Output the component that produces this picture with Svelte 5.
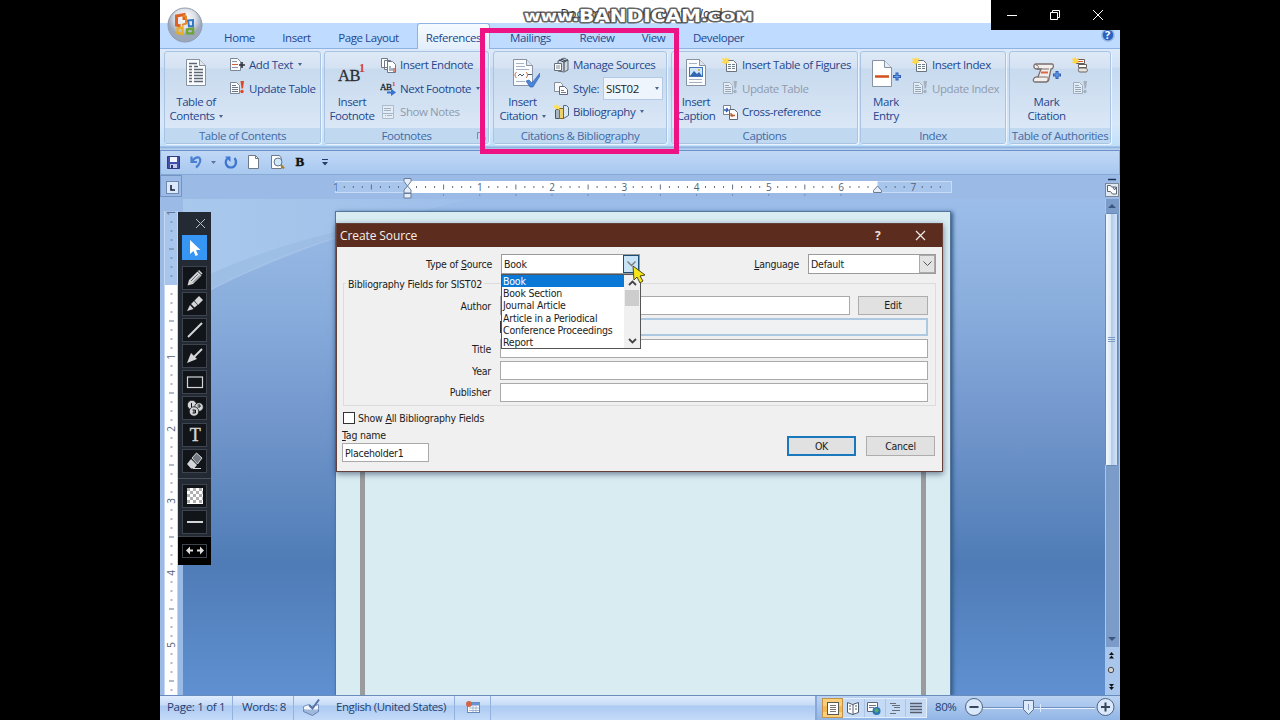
<script>
    const tabs = [
        { name: 'Home' },
        { name: 'Insert' },
        { name: 'Page Layout' },
        { name: 'References', active: true },
        { name: 'Mailings' },
        { name: 'Review' },
        { name: 'View' },
        { name: 'Developer' },
    ];

    const groups = [
        {
            id: 'toc', title: 'Table of Contents',
            big: { icon: 'page', lines: ['Table of', 'Contents'], arrow: true },
            items: [
                { icon: 'addtext', text: 'Add Text', arrow: true },
                { icon: 'update', text: 'Update Table' },
            ],
        },
        {
            id: 'foot', title: 'Footnotes', launcher: true,
            big: { icon: 'footnote', lines: ['Insert', 'Footnote'] },
            items: [
                { icon: 'endnote', text: 'Insert Endnote' },
                { icon: 'next', text: 'Next Footnote', arrow: true },
                { icon: 'notes', text: 'Show Notes', off: true },
            ],
        },
        {
            id: 'cite', title: 'Citations & Bibliography',
            big: { icon: 'citation', lines: ['Insert', 'Citation'], arrow: true },
            items: [
                { icon: 'manage', text: 'Manage Sources' },
                { icon: 'style', text: 'Style:', combo: 'SIST02' },
                { icon: 'biblio', text: 'Bibliography', arrow: true },
            ],
        },
        {
            id: 'caption', title: 'Captions',
            big: { icon: 'caption', lines: ['Insert', 'Caption'] },
            items: [
                { icon: 'newtable', text: 'Insert Table of Figures' },
                { icon: 'updateoff', text: 'Update Table', off: true },
                { icon: 'cross', text: 'Cross-reference' },
            ],
        },
        {
            id: 'index', title: 'Index',
            big: { icon: 'entry', lines: ['Mark', 'Entry'] },
            items: [
                { icon: 'newtable', text: 'Insert Index' },
                { icon: 'updateoff', text: 'Update Index', off: true },
            ],
        },
        {
            id: 'auth', title: 'Table of Authorities',
            big: { icon: 'scroll', lines: ['Mark', 'Citation'] },
            items: [
                { icon: 'newauth', text: '' },
                { icon: 'updateoff', text: '', off: true },
            ],
        },
    ];

    const sources = ['Book', 'Book Section', 'Journal Article', 'Article in a Periodical', 'Conference Proceedings', 'Report'];
    const tools = ['select', 'pencil', 'marker', 'line', 'arrow', 'rect', 'number', 'text', 'eraser'];

    const EIGHTH = 9.03;
    const hTicks = [];
    for (let i = -7; i <= 59; i++) {
        if (i !== 0 && i !== 52) hTicks.push({ i, at: 72.5 + i * EIGHTH });
    }
    const vTicks = [];
    for (let i = -8; i <= 45; i++) {
        if (i !== 0) vTicks.push({ i, at: 73 + i * 9 });
    }
</script>

{#snippet icon(name)}
    {#if name === 'page' || name === 'citation' || name === 'caption'}
        <svg width="34" height="32" viewBox="0 0 34 32">
            <path d="M7.500 1.500h13l6 6v20h-19z" fill="#fbfcfe" stroke="#8792a3" />
            <path d="M20.500 1.500v6h6" fill="#dfe6ef" stroke="#8792a3" />
            {#if name === 'page'}
                <path d="M10 5.500h8M10 8.500h3M15 8.500h4M10 11.500h3M15 11.500h9M10 14.500h3M15 14.500h9M10 17.500h3M15 17.500h9M10 20.500h3M15 20.500h9M10 23.500h3M15 23.500h9" stroke="#5c6775" stroke-width="1.300" />
            {:else if name === 'citation'}
                <path d="M10 5.500h8M10 8.500h9M10 11.500h13M10 23.500h9" stroke="#a4b2c3" />
                <path d="M10.500 14c-2 2-2 4 0 6M20 14c2 2 2 4 0 6" fill="none" stroke="#cb5a27" />
                <path d="M12 18l2-2 2 2 2-2M22 16.500h4" fill="none" stroke="#4d5560" />
                <path d="M20 23l3-1 3 3 8-10 1 1-8 13h-3z" fill="#4a86d8" stroke="#2858aa" stroke-width=".6" />
            {:else}
                <path d="M10 5.500h8M10 21.500h13M10 24.500h13" stroke="#a4b2c3" />
                <rect x="10.500" y="9.500" width="13" height="9" fill="#cfe5fb" stroke="#4474b7" />
                <path d="M11 18l4-5 3 3 2-2 3 4z" fill="#2f66ae" />
                <circle cx="20" cy="12" r="1" fill="#d99b35" />
            {/if}
        </svg>
    {:else if name === 'footnote'}
        <svg width="34" height="32" viewBox="0 0 34 32">
            <text x="3" y="23" class="serif" font-size="17" fill="#2c2c31" stroke="#2c2c31" stroke-width=".3" textLength="22" lengthAdjust="spacingAndGlyphs">AB</text>
            <text x="24" y="14" class="serif" font-size="12" font-weight="bold" fill="#d4442b">1</text>
        </svg>
    {:else if name === 'entry'}
        <svg width="34" height="32" viewBox="0 0 34 32">
            <path d="M3.500 2.500h12l7 7v19h-19z" fill="#fff" stroke="#8792a3" />
            <path d="M15.500 2.500v7h7" fill="#e4eaf2" stroke="#8792a3" />
            <path d="M6 18.500h14" stroke="#d1501d" stroke-width="2.500" />
            <path d="M24 18.500h8M28 14.500v8" stroke="#2c5cb4" stroke-width="3" />
            <path d="M25 18.500h6M28 15.500v6" stroke="#6fa4ec" />
        </svg>
    {:else if name === 'scroll'}
        <svg width="34" height="32" viewBox="0 0 34 32">
            <path d="M6 6c-3 0-3 5 1 5h4l-3 8c-5-1-6 5-3 5h11c2 0 3-1 3-4l2-9c3 0 3-5 1-5z" fill="#f3efed" stroke="#7b6f6e" stroke-width="1.300" />
            <path d="M6 7c3 0 3 4 1 4h12M8 19h9c2 0 1 4-1 5" fill="none" stroke="#7b6f6e" />
            <path d="M11 14.500h7" stroke="#dd6843" stroke-width="2" />
            <path d="M23 17h8M27 13v8" stroke="#2c5cb4" stroke-width="3" />
            <path d="M24 17h6M27 14v6" stroke="#6fa4ec" />
        </svg>
    {:else}
        <svg width="16" height="16" viewBox="0 0 16 16">
            {#if name === 'addtext'}
                <path d="M1.500 1.500h7l3 3v9h-10z" fill="#f8fafc" stroke="#7b8797" />
                <path d="M3 4.500h5M3 10.500h6" stroke="#8793a4" /><path d="M3 7.500h6" stroke="#d45d3e" />
                <path d="M10 8h6M13 5v6" stroke="#2b3138" stroke-width="1.600" />
            {:else if name === 'update' || name === 'updateoff'}
                <g class:faded={name === 'updateoff'}>
                    <path d="M1.500 2.500h6l3 3v8h-9z" fill="#f8fafc" stroke="#7b8797" />
                    <path d="M3 5.500h4M3 7.500h6M3 9.500h6M3 11.500h6" stroke="#6b7787" />
                    <path d="M11.500 1h3.500l-1 7.500h-1.500z" fill={name === 'update' ? '#e2471f' : '#858c97'} />
                    <circle cx="13" cy="11.500" r="1.700" fill={name === 'update' ? '#e2471f' : '#858c97'} />
                </g>
            {:else if name === 'endnote'}
                <path d="M1.500 1.500h6v9h-6zM4.500 3.500h6v9h-6z" fill="#fff" stroke="#6f7884" />
                <path d="M7.500 4.500h5l3 3v8h-8z" fill="#fff" stroke="#6f7884" />
                <path d="M10 9v5M12 11v3" stroke="#526b91" /><path d="M14 11v4" stroke="#ce4326" stroke-width="1.300" />
            {:else if name === 'next'}
                <text x="0" y="10" class="serif" font-size="9" fill="#22252b" stroke="#22252b" stroke-width=".3">AB</text>
                <text x="12" y="6" class="serif" font-size="7" font-weight="bold" fill="#d43d26">1</text>
                <path d="M7 11.500h4v-3l5 4-5 3.500v-2.500h-4z" fill="#3574cf" />
            {:else if name === 'notes'}
                <g opacity=".6"><path d="M2.500 1.500h11v13h-11z" fill="#eef2f7" stroke="#93a0b1" />
                <path d="M4 4.500h7M4 6.500h7M3 9.500h10M5 11.500h1M7 11.500h5" stroke="#8190a3" /></g>
            {:else if name === 'manage'}
                <path d="M5 4l6-3 4 2v10l-4 2-6-1z" fill="#cfd7e0" stroke="#586473" />
                <path d="M11 5l4-2M11 5v9M6 3l5 2M8 2l5 2" stroke="#303b49" />
                <path d="M1.500 6.500h7v7h-7z" fill="#fff" stroke="#65707e" /><path d="M3 9h4M3 11h4" stroke="#7f8995" />
            {:else if name === 'style'}
                <path d="M1.500 2.500h6l2 2v7h-8z" fill="#f6f8fa" stroke="#87919e" />
                <path d="M6.500 6.500h5l3 3v5h-8z" fill="#fff" stroke="#5f6b7a" />
                <path d="M8 10.500h3M8 12.500h5" stroke="#6f7c8d" />
            {:else if name === 'biblio'}
                <path d="M2.500 5.500h4v9h-4z" fill="#aab5c2" stroke="#4a5564" />
                <path d="M6.500 4.500h4v10h-4z" fill="#ecd16b" stroke="#8e6b1b" />
                <path d="M10.500 1.500h3l2 2v8l-5 3z" fill="#d9e8f8" stroke="#556579" />
                <path d="M1 1l2 1 1-2 1 2 3 0-2 2 1 2-3-1-2 1 0-2-2-1z" fill="#ffdf54" />
            {:else if name === 'newtable'}
                <path d="M4.500 3.500h7l3 3v8h-10z" fill="#fafbfc" stroke="#69737f" />
                <path d="M6 7.500h3M6 9.500h3M6 11.500h3M10 7.500h3M10 9.500h3M10 11.500h3" stroke="#70808f" />
                <path d="M0 1l3 1 1-2 1 2 3-1-2 3 2 2-3 0-2 2-1-2-3 0 2-2z" fill="#ffd94e" />
            {:else if name === 'cross'}
                <path d="M1.500 1.500h7v9h-7z" fill="#fff" stroke="#7a8490" />
                <path d="M7.500 5.500h5l3 3v7h-8z" fill="#fff" stroke="#5f6975" />
                <path d="M2 6h4l-1.500-2M4 8l2-2" fill="none" stroke="#2e60af" stroke-width="1.300" />
                <path d="M9 9v2.500h4M10 13v-3" fill="none" stroke="#be5d31" stroke-width="1.300" />
            {:else if name === 'newauth'}
                <path d="M4.500 2.500h8v4h-8zM6.500 7.500h8v3h-8z" fill="#fff" stroke="#665d5a" />
                <path d="M6 4.500h5" stroke="#cf582e" /><path d="M7 11h6c3 0 3 4 1 4h-6c-2 0-2-2-1-4z" fill="#e8e2df" stroke="#6c6461" />
                <path d="M0 1l2 1 1-2 1 2 3-1-1 3 1 2-3 0-1 1-1-1-2 0 1-2z" fill="#ffd54a" />
            {/if}
        </svg>
    {/if}
{/snippet}

{#snippet tool(name)}
    <svg width="18" height="18" viewBox="0 0 18 18" fill="none" stroke="#d3d5d7">
        {#if name === 'select'}
            <path d="M4 1v14l3.500-3 2 5 2.500-1-2-5h4.500z" fill="#fff" stroke="none" />
        {:else if name === 'pencil'}
            <path d="M1.500 16.500l1.500-5.500 8.500-8.500 4 4-8.500 8.500z" fill="#d3d5d7" stroke="none" />
            <path d="M5 12l7-7M7 13.500l7-7" stroke="#4a4f56" stroke-width=".8" /><path d="M12.500 1.500l3.500 3.500" stroke-width="1.500" />
        {:else if name === 'marker'}
            <path d="M8.500 5.500l4.500-4.500 4 4-5 5z" fill="#d3d5d7" stroke="none" /><path d="M5 9l3-3 3.500 4-3 2.500zM1 16l3-6 3.500 4z" fill="#d3d5d7" stroke="none" />
        {:else if name === 'line'}
            <path d="M2 16L16 2" stroke-width="2" />
        {:else if name === 'arrow'}
            <path d="M16 2L7 11" stroke-width="2" /><path d="M1 16l4-10 6 6z" fill="#d3d5d7" stroke="none" />
        {:else if name === 'rect'}
            <rect x="1.500" y="4" width="15" height="10.500" stroke-width="1.200" />
        {:else if name === 'number'}
            <g fill="#d3d5d7" stroke="#15181d" stroke-width=".8"><circle cx="6" cy="6" r="4.700" /><circle cx="13" cy="8" r="4.300" /><circle cx="8" cy="12.500" r="4.700" /></g>
            <path d="M5.500 4v4M11.500 6h2.500v2h-2.500M6.500 11h3v3h-3M8 11v3" stroke="#15181d" />
        {:else if name === 'text'}
            <text x="9" y="15" class="serif" font-size="18" text-anchor="middle" fill="#d3d5d7" stroke-width=".4">T</text>
        {:else if name === 'eraser'}
            <path d="M1 12l4-5 6 6-3 3.500H5z" fill="#d3d5d7" stroke="none" /><path d="M6 6l4.500-5 5.500 5-4.500 6z" fill="#737980" stroke="#d3d5d7" /><path d="M7 16.500h8" />
        {/if}
    </svg>
{/snippet}

<div class="screen">
    <div class="word">
        <header class="titlebar">
            <span class="titlebar__text">Document1 - Microsoft Word</span>
        </header>

        <nav class="tabs">
            {#each tabs as tab, i}
                <div class="tabs__tab tabs__tab--{i}" class:active={tab.active}>{tab.name}</div>
            {/each}
            <svg class="tabs__help" width="14" height="14" viewBox="0 0 14 14">
                <circle cx="7" cy="7" r="6" fill="#2961bd" stroke="#94b4df" stroke-width="1.500" />
                <text x="4" y="11" font-size="11" font-weight="bold" fill="#fff">?</text>
            </svg>
        </nav>

        <div class="ribbon">
            {#each groups as group}
                <section class="group group--{group.id}">
                    <div class="group__body">
                        <div class="big">
                            <div class="big__icon">{@render icon(group.big.icon)}</div>
                            <div>{group.big.lines[0]}</div>
                            <div>{group.big.lines[1]}{#if group.big.arrow}<i class="caret"></i>{/if}</div>
                        </div>
                        <div class="small">
                            {#each group.items as item}
                                <div class="small__row" class:off={item.off}>
                                    {@render icon(item.icon)}
                                    <span>{item.text}</span>
                                    {#if item.combo}
                                        <div class="combo">{item.combo}<i class="caret"></i></div>
                                    {:else if item.arrow}
                                        <i class="caret"></i>
                                    {/if}
                                </div>
                            {/each}
                        </div>
                    </div>
                    <footer class="group__title">
                        {group.title}
                        {#if group.launcher}
                            <svg class="launcher" width="9" height="9" viewBox="0 0 9 9" fill="none" stroke="#6b8bb8"><path d="M.5 7V.5H7M4 4l4 4M8 5v3H5" /></svg>
                        {/if}
                    </footer>
                </section>
            {/each}
        </div>

        <div class="quick">
            <svg width="180" height="22" viewBox="0 0 180 22">
                <path d="M6.500 5.500h12v12h-12z" fill="#4150a8" stroke="#303b86" />
                <path d="M9 6h7v5h-7z" fill="#f4f6ff" /><path d="M9 13h7v4h-7z" fill="#c4cae9" /><path d="M10 14h2v3h-2z" fill="#29357c" />
                <path d="M30.500 5.500v5.500h5.500M31.500 10c4-6 9-4 7.500 1-1 3-2 4-4 5.500" fill="none" stroke="#4a7fd2" stroke-width="2.200" />
                <path d="M50 10h5l-2.500 3z" fill="#58759e" />
                <path d="M66 7.500c-3 5 0 9 4 9s7-5 3.500-9.500" fill="none" stroke="#3e77cf" stroke-width="2.200" /><path d="M64 5.500h5.500v5.500z" fill="#3e77cf" />
                <path d="M87.500 4.500h7l3 3v10h-10z" fill="#fff" stroke="#707b89" /><path d="M94.500 4.500v3h3" fill="none" stroke="#707b89" />
                <path d="M110.500 4.500h8l2 3v10h-10z" fill="#fff" stroke="#707b89" /><circle cx="117" cy="11" r="4" fill="#cfe8fa" stroke="#65778c" /><path d="M120 14l3 3.500" stroke="#a68230" stroke-width="2" />
                <text x="134.500" y="15" class="serif" font-size="13" font-weight="bold" fill="#111" stroke="#111" stroke-width=".4">B</text>
                <path d="M161 8.500h6" stroke="#243d6a" /><path d="M161 11h6l-3 3.500z" fill="#243d6a" />
            </svg>
        </div>

        <div class="ruler">
            <div class="ruler__corner"><svg width="13" height="13" viewBox="0 0 13 13"><rect x=".5" y=".5" width="12" height="12" fill="#dce9fa" stroke="#6d87ae" /><path d="M5 4v5h4" fill="none" stroke="#14233b" stroke-width="1.600" /></svg></div>
            <svg class="ruler__scale" width="620" height="25" viewBox="0 0 620 25">
                <rect x=".5" y="6.500" width="616" height="11" fill="#a8c5ec" stroke="#c9dcf5" />
                <rect x="72.500" y="6" width="470" height="12" fill="#fff" />
                {#each hTicks as t}
                    {#if t.i % 8 === 0}
                        <text x={t.at} y="16" text-anchor="middle">{Math.abs(t.i / 8)}</text>
                    {:else if t.i % 4 === 0}
                        <path d="M{t.at} 9.500v5" stroke="#5f6e84" />
                    {:else}
                        <path d="M{t.at} 11v2" stroke="#5f6e84" />
                    {/if}
                    {#if t.i % 4 === 0 && t.i > 0 && t.i < 50}<path d="M{t.at} 19v2" stroke="#7690b5" />{/if}
                {/each}
                <text x="-2" y="16">1</text>
                <path d="M69 3.500h7v3l-3.500 4.500-3.500-4.500zM72.500 11l3.500 4v3h-7v-3zM69 18.500h7v4.500h-7z" fill="#e4edf8" stroke="#687c98" />
                <path d="M538.500 17.500v-2l4-4.500 4 4.500v2z" fill="#e4edf8" stroke="#687c98" />
            </svg>
            <svg class="ruler__toggle" width="15" height="25" viewBox="0 0 15 25">
                <path d="M3 4.500h8" stroke="#1d3357" stroke-width="1.500" />
                <rect x=".5" y="8.500" width="13" height="13" fill="#e0e8f2" stroke="#7b8698" />
                <path d="M2.500 10.500h3l1 1.500h5v7h-4l-2-2.500h-3zM8 12l1.500 3 2-3" fill="#fff" stroke="#5c6674" />
            </svg>
        </div>

        <main class="work">
            <div class="vruler">
                <svg width="18" height="496" viewBox="0 0 18 496">
                    <rect x="5" y="12" width="12" height="74" fill="#a8c5ec" />
                    <rect x="5" y="86" width="12" height="410" fill="#fff" />
                    <path d="M4.500 12v484M17.500 12v484" stroke="#c4d8f2" />
                    {#each vTicks as t}
                        {#if t.i % 8 === 0}
                            <text transform="translate(15 {t.at + 13}) rotate(-90)" text-anchor="middle">{Math.abs(t.i / 8)}</text>
                        {:else if t.i % 4 === 0}
                            <path d="M9 {t.at + 13}h5" stroke="#65748a" />
                        {:else}
                            <path d="M10.500 {t.at + 13}h2" stroke="#65748a" />
                        {/if}
                    {/each}
                </svg>
            </div>
            <div class="canvas">
                <svg class="canvas__swoosh" width="300" height="120" viewBox="0 0 300 120">
                    <defs><linearGradient id="sheen"><stop offset="0" stop-color="#a9c8ec" /><stop offset="1" stop-color="#9ebfea" /></linearGradient></defs>
                    <path d="M0 0h290Q160 28 29 90L0 106z" fill="url(#sheen)" />
                    <path d="M0 88Q80 48 170 29L290 0Q160 28 29 90L0 106z" fill="#9bbbe4" opacity=".8" />
                    <path d="M0 106L29 90Q90 58 152 39" fill="none" stroke="#a9c4e8" />
                </svg>
                <div class="page"></div>
            </div>
            <svg class="scroll" width="15" height="496" viewBox="0 0 15 496">
                <defs><linearGradient id="thumb"><stop offset="0" stop-color="#f4f9ff" /><stop offset=".45" stop-color="#dbe8f7" /><stop offset=".5" stop-color="#b5cde9" /><stop offset="1" stop-color="#d4e6fa" /></linearGradient></defs>
                <rect width="15" height="496" fill="#a9c6ec" />
                <rect x="1" width="13" height="448" fill="#7b9cc8" />
                <path d="M3 9h8l-4-4z" fill="#3b5780" />
                <rect x=".5" y="14.500" width="12" height="252" rx="1" fill="url(#thumb)" stroke="#6788b7" />
                <path d="M3 138.500h7M3 140.500h7M3 142.500h7" stroke="#7e9cc3" />
                <path d="M3 438h8l-4 4z" fill="#3b5780" />
                <path d="M4 456h5l-2.500-3zM4 459.500h5l-2.500-3zM4 485h5l-2.500 3zM4 488h5l-2.500 3z" fill="#111" />
                <circle cx="6" cy="471" r="2.700" fill="#d5d2cd" stroke="#494a50" />
            </svg>
        </main>

        <footer class="status">
            <div class="status__cell status__cell--page">Page: 1 of 1</div>
            <div class="status__cell status__cell--words">Words: 8</div>
            <div class="status__cell status__cell--lang">
                <svg width="20" height="18" viewBox="0 0 20 18"><path d="M1.500 8.500l5-2 3 2 7-2v5l-6 4-9-4z" fill="#f3f7fd" stroke="#7791ba" /><path d="M1.500 11.500v2l9 4 6-4v-2" fill="#9fb8dc" stroke="#6382b3" /><path d="M7 7l3.500 3.500L17 1.500" fill="none" stroke="#5573a8" stroke-width="2" /></svg>
                <span>English (United States)</span>
            </div>
            <div class="status__cell status__cell--macro"><svg width="16" height="14" viewBox="0 0 16 14"><rect x="2.500" y="2.500" width="12" height="10" fill="#fff" stroke="#6788b7" /><path d="M3 4h12" stroke="#6b93cf" stroke-width="3" /><path d="M4 8h10M4 10.500h10M8 6v6M11 6v6" stroke="#9fb6d6" /><circle cx="4" cy="4" r="3" fill="#d36549" /></svg></div>
            <div class="status__fill"></div>
            <div class="status__right">
                <svg width="105" height="20" viewBox="0 0 105 20" fill="none">
                    <rect x=".5" y=".5" width="104" height="19" fill="#c5daf5" stroke="#e3eefc" />
                    <rect x=".5" y=".5" width="20" height="19" fill="#fbce7a" stroke="#c39347" /><rect x="1" y="8" width="19" height="6" fill="#f6b851" />
                    <rect x="5.500" y="4.500" width="11" height="12" fill="#fff" stroke="#5c584d" /><path d="M8 7.500h6M8 9.500h6M8 11.500h6M8 13.500h6" stroke="#77736b" />
                    <path d="M25.500 4.500l5 2 6-2v10l-6 2-5-2zM31 6v11" fill="#fff" stroke="#4d5a69" /><path d="M27 8h2M27 11h2M33 8h2M33 11h2" stroke="#4d5a69" />
                    <path d="M45.500 4.500h10v9h-10z" fill="#fff" stroke="#5b6878" /><path d="M47 7.500h7M47 9.500h5" stroke="#6d7989" /><circle cx="54.500" cy="13" r="4" fill="#2876b9" /><path d="M52 12l3-2 2 3-3 2z" fill="#5ba96a" />
                    <path d="M68 5.500h6M70 7.500h8M72 9.500h6M70 12.500h8M68 15.500h6" stroke="#666f7b" /><path d="M88 5.500h12M88 8.500h12M88 11.500h12M88 14.500h12" stroke="#555e6a" stroke-width="1.300" />
                    <path d="M42.500 1v18M63.500 1v18M83.500 1v18" stroke="#adc4e4" />
                </svg>
                <span class="status__zoom">80%</span>
                <svg width="154" height="24" viewBox="0 0 154 24">
                    <path d="M20 11.500h114" stroke="#7090bf" /><path d="M20 12.500h114" stroke="#e7f1ff" /><path d="M79.500 8v8" stroke="#dceaff" />
                    <circle cx="13" cy="11" r="8.500" fill="#d9e8fb" stroke="#52647f" /><path d="M8.500 11h9" stroke="#37465b" stroke-width="2" />
                    <path d="M62.500 4.500h10v9l-5 5-5-5z" fill="#dceafb" stroke="#59718f" /><path d="M67.500 8v6" stroke="#8aa2c1" />
                    <circle cx="144.500" cy="11" r="8.500" fill="#d9e8fb" stroke="#52647f" /><path d="M140 11h9M144.500 6.500v9" stroke="#37465b" stroke-width="2" />
                </svg>
            </div>
        </footer>

        <svg class="orb" width="38" height="38" viewBox="0 0 38 38">
            <defs><radialGradient id="orb" cy=".3"><stop offset="0" stop-color="#fff" /><stop offset=".6" stop-color="#dce0e8" /><stop offset="1" stop-color="#9ba7bb" /></radialGradient></defs>
            <circle cx="19" cy="19" r="17" fill="url(#orb)" stroke="#909bad" />
            <g fill="none">
                <path d="M18 14V8.500l-7.500 1.500v9l4 1" stroke="#dc6224" stroke-width="3" />
                <path d="M17 9.500l3 1v7l-4 1.500" stroke="#e58b2c" stroke-width="2" />
                <path d="M22 14.500l5-.5v6l-4 .5z" stroke="#3178c8" stroke-width="2" />
                <path d="M11.500 22.500l5-1v6.500l-5-1z" stroke="#eaad27" stroke-width="2.300" />
                <path d="M21 23.500l6-1v5l-6-.3z" stroke="#6fa33b" stroke-width="2.500" />
            </g>
        </svg>

        <div class="controls">
            <svg width="129" height="30" viewBox="0 0 129 30" fill="none" stroke="#fff">
                <path d="M16 15.500h10M102 10l10 10M112 10l-10 10" />
                <path d="M59.500 12.500h7v7h-7zM61.500 12.500v-2h7v7h-2" />
            </svg>
        </div>

        <svg class="watermark" width="250" height="28" viewBox="0 0 250 28">
            <g font-weight="bold" fill="#fff" stroke="#3c3c3c" stroke-opacity=".8" stroke-width="3" paint-order="stroke" stroke-linejoin="round">
                <text x="12" y="21" font-size="14" textLength="55" lengthAdjust="spacingAndGlyphs">www.</text>
                <text x="67" y="22" font-size="17" textLength="122" lengthAdjust="spacingAndGlyphs">BANDICAM</text>
                <text x="189" y="21" font-size="13" textLength="52" lengthAdjust="spacingAndGlyphs">.COM</text>
            </g>
        </svg>

        <div class="highlight"></div>

        <aside class="tools">
            <svg class="tools__close" width="11" height="11" viewBox="0 0 11 11"><path d="M1 1l9 9M10 1l-9 9" stroke="#b9bdc2" /></svg>
            {#each tools as name}
                <div class="tools__btn" class:selected={name === 'select'}>{@render tool(name)}</div>
            {/each}
            <div class="tools__sep"></div>
            <div class="tools__btn">
                <svg width="16" height="16" viewBox="0 0 16 16"><rect width="16" height="16" fill="#fff" /><path d="M0 1.500h16M0 7.500h16M0 13.500h16" stroke="#b0b0b0" stroke-width="3" stroke-dasharray="3 3" /><path d="M3 4.500h13M3 10.500h13" stroke="#b0b0b0" stroke-width="3" stroke-dasharray="3 3" /></svg>
            </div>
            <div class="tools__btn"><svg width="16" height="16" viewBox="0 0 16 16"><path d="M0 8h16" stroke="#d3d5d7" stroke-width="2" /></svg></div>
            <div class="tools__foot">
                <div class="tools__resize"><svg width="20" height="9" viewBox="0 0 20 9"><path d="M1 4.500l4-4v3h3v2h-3v3zM19 4.500l-4-4v3h-3v2h3v3z" fill="#ddd" /></svg></div>
            </div>
        </aside>

        <div class="dialog">
            <div class="dialog__title">
                <span>Create Source</span>
                <svg width="60" height="22" viewBox="0 0 60 22"><text x="2" y="15" font-size="12" font-weight="bold" fill="#eee0dc">?</text><path d="M43 6l9 9M52 6l-9 9" stroke="#f3e9e6" stroke-width="1.200" /></svg>
            </div>
            <div class="dialog__top">
                <span class="label">Type of <u>S</u>ource</span>
                <div class="select select--type">Book
                    <span class="select__btn select__btn--hot"><svg width="9" height="6" viewBox="0 0 9 6"><path d="M.5.5l4 4 4-4" fill="none" stroke="#777" stroke-width="1.300" /></svg></span>
                    <div class="menu">
                        <div class="menu__list">
                            {#each sources as s, i}
                                <div class="menu__item" class:picked={i === 0}>{s}</div>
                            {/each}
                        </div>
                        <div class="menu__bar">
                            <svg width="9" height="6" viewBox="0 0 9 6"><path d="M1 5l3.500-3.500L8 5" fill="none" stroke="#444" stroke-width="1.800" /></svg>
                            <div class="menu__thumb"></div>
                            <svg width="9" height="6" viewBox="0 0 9 6"><path d="M1 1l3.500 3.500L8 1" fill="none" stroke="#444" stroke-width="1.800" /></svg>
                        </div>
                    </div>
                </div>
                <span class="label label--lang"><u>L</u>anguage</span>
                <div class="select select--lang">Default
                    <span class="select__btn"><svg width="9" height="6" viewBox="0 0 9 6"><path d="M.5.5l4 4 4-4" fill="none" stroke="#555" /></svg></span>
                </div>
            </div>
            <div class="fields">
                <div class="fields__legend"><span>Bibliography Fields for SIST02</span></div>
                <div class="fields__row"><span class="label">Author</span><div class="input"></div><div class="button button--edit">Edit</div></div>
                <div class="fields__row"><span class="label"></span><i class="check"></i><div class="input input--corp"></div></div>
                <div class="fields__row"><span class="label">Title</span><div class="input"></div></div>
                <div class="fields__row"><span class="label">Year</span><div class="input"></div></div>
                <div class="fields__row"><span class="label">Publisher</span><div class="input"></div></div>
            </div>
            <div class="dialog__bottom">
                <div class="dialog__tag">
                    <div class="dialog__show"><i class="check"></i><span>Show <u>A</u>ll Bibliography Fields</span></div>
                    <div class="dialog__tagname"><u>T</u>ag name</div>
                    <div class="input input--tag">Placeholder1</div>
                </div>
                <div class="button button--ok">OK</div>
                <div class="button">Cancel</div>
            </div>
        </div>

        <svg class="cursor" width="14" height="20" viewBox="0 0 14 20"><path d="M1 1l1 14 3-3 3 6 3-2-3-5 5-1z" fill="#f5e61a" stroke="#4d4a20" /></svg>
    </div>
</div>

<style>
    :global(body) {
        margin: 0;
        background: #000;
    }

    .screen {
        width: 1280px;
        height: 720px;
        background: #000;
        overflow: hidden;
        font-family: "Open Sans", "Noto Sans", sans-serif;
    }

    .word {
        position: relative;
        width: 960px;
        height: 720px;
        margin: 0 auto;
        display: flex;
        flex-direction: column;
        overflow: hidden;
        background: #a9c8f0;
        font-size: 11.5px;
        letter-spacing: -0.42px;
        color: #24478d;
        white-space: nowrap;
    }

    svg {
        display: block;
        flex: none;
    }

    .serif {
        font-family: "Liberation Serif", serif;
    }

    .titlebar {
        height: 23px;
        background: #fff;
        display: flex;
        justify-content: center;
        align-items: center;
    }
    .titlebar__text {
        color: #333;
        font-size: 12px;
        letter-spacing: 0;
        padding: 3px 0 0 3px;
    }

    .tabs {
        height: 26px;
        background: #bfdbff;
        display: flex;
        padding-left: 48px;
        line-height: 30px;
        border-bottom: 1px solid #8db2e3;
        box-sizing: border-box;
    }
    .tabs__tab {
        text-align: center;
        flex: none;
        height: 26px;
    }
    .tabs__tab--0 { width: 63px; }
    .tabs__tab--1 { width: 51px; }
    .tabs__tab--2 { width: 93px; }
    .tabs__tab--3 { width: 73px; margin-left: 2px; }
    .tabs__tab--4 { width: 81px; }
    .tabs__tab--5 { width: 52px; }
    .tabs__tab--6 { width: 61px; }
    .tabs__tab--7 { width: 69px; }
    .tabs__tab.active {
        background: linear-gradient(#f5faff, #e3eefb);
        border: 1px solid #8db2e3;
        border-bottom: 0;
        border-radius: 3px 3px 0 0;
        box-sizing: border-box;
        line-height: 28px;
    }
    .tabs__help {
        margin: 5px 5px 0 auto;
    }

    .ribbon {
        height: 101px;
        box-sizing: border-box;
        padding: 2px 4px 6px;
        display: flex;
        background: linear-gradient(#dce9f8 0, #d2e2f5 18px, #c5d9f0 19px, #d8e8f9 75px, #bfe0fa 97px, #86a9d6 98px, #b5d0f2 100px);
    }
    .group {
        display: flex;
        flex-direction: column;
        box-sizing: border-box;
        border: 1px solid #a9c3e3;
        border-radius: 3px;
        background: linear-gradient(#dee9f6 0, #d5e2f2 16px, #c8daee 17px, #dae7f6 76px);
        box-shadow: 1px 1px 0 #ecf5ff;
        flex: none;
    }
    .group--toc { width: 157px; margin-right: 3px; }
    .group--foot { width: 165px; margin-right: 4px; }
    .group--cite { width: 174px; margin-right: 4px; }
    .group--caption { width: 187px; margin-right: 2px; }
    .group--index { width: 146px; margin-right: 3px; }
    .group--auth { width: 102px; }
    .group__body {
        height: 76px;
        display: flex;
    }
    .group__title {
        flex: 1;
        background: #c1d8f1;
        color: #416aa5;
        line-height: 15px;
        text-align: center;
        position: relative;
    }
    .launcher {
        position: absolute;
        right: 2px;
        top: 4px;
    }

    .big {
        text-align: center;
        line-height: 14px;
        flex: none;
    }
    .big__icon {
        height: 43px;
        display: flex;
        justify-content: center;
        padding-top: 6px;
        box-sizing: border-box;
    }
    .group--toc .big { width: 62px; margin-right: 2px; }
    .group--foot .big { width: 54px; margin-right: 1px; }
    .group--cite .big { width: 57px; margin-right: 2px; }
    .group--caption .big { width: 48px; margin-right: 2px; }
    .group--index .big { width: 50px; margin-right: 1px; }
    .group--auth .big { width: 73px; margin-right: 1px; }
    .small {
        padding-top: 1px;
        flex: 1;
    }
    .group--auth .small { margin-left: -12px; }
    .small__row {
        height: 23.5px;
        display: flex;
        align-items: center;
        gap: 4px;
    }
    .off {
        color: #8f9bac;
    }
    .faded {
        opacity: .55;
    }
    .caret {
        display: inline-block;
        border: 2.5px solid transparent;
        border-top: 3px solid #4a658f;
        border-bottom: 0;
        vertical-align: middle;
        margin-left: 4px;
    }
    .small__row > .caret { margin-left: 1px; }
    .combo {
        width: 60px;
        height: 23px;
        box-sizing: border-box;
        border: 1px solid #b3c9e6;
        background: #eef5fd;
        color: #222;
        display: flex;
        align-items: center;
        justify-content: space-between;
        padding: 0 3px 0 2px;
    }

    .quick {
        height: 25px;
        box-sizing: border-box;
        border: 1px solid #87a9d5;
        border-top-color: #6b91c6;
        background: linear-gradient(#c0d8f6, #a8c8ef);
    }

    .ruler {
        height: 24px;
        display: flex;
        background: #9bbbe6;
    }
    .ruler__corner {
        width: 22px;
        height: 22px;
        border: 1px solid #7494c4;
        box-sizing: border-box;
        padding: 5px 0 0 5px;
        margin-right: 153px;
    }
    .ruler__scale, .vruler {
        font-size: 10px;
        fill: #52627a;
    }
    .ruler__scale {
        overflow: visible;
    }
    .ruler__toggle {
        margin-left: auto;
    }

    .work {
        height: 496px;
        display: flex;
    }
    .vruler {
        width: 23px;
        background: #9bbbe6;
    }
    .canvas {
        flex: 1;
        position: relative;
        display: flex;
        overflow: hidden;
        background: linear-gradient(#9cbde9 0, #89addc 110px, #7599ce 210px, #4f7cb6 365px, #6090d1 496px);
    }
    .canvas__swoosh {
        position: absolute;
        left: 0;
        top: 0;
    }
    .page {
        position: relative;
        width: 616px;
        height: 484px;
        box-sizing: border-box;
        margin: 12px 0 0 152px;
        border: 1px solid #53779b;
        border-bottom: 0;
        box-shadow: 2px 1px 4px #315985;
        background: #d9ecf2 linear-gradient(90deg, #d9ecf2 24px, #999b9c 24px, #999b9c 29px, #d9ecf2 29px, #d9ecf2 585px, #999b9c 585px, #999b9c 590px, #d9ecf2 590px) 0 20px no-repeat;
    }

    .status {
        height: 25px;
        box-sizing: border-box;
        border-top: 1px solid #688cbb;
        background: linear-gradient(#dfecfd 0, #c6dbf7 9px, #abc9f1 10px, #c5dbf9 24px);
        display: flex;
        color: #253e70;
        line-height: 22px;
    }
    .status__cell {
        border-right: 1px solid #93b1dc;
        box-sizing: border-box;
        display: flex;
        align-items: center;
        flex: none;
        padding-bottom: 3px;
    }
    .status__cell--page { width: 73px; padding-left: 7px; letter-spacing: -0.3px; }
    .status__cell--words { width: 61px; padding-left: 9px; }
    .status__cell--lang { width: 161px; padding-left: 8px; gap: 14px; }
    .status__cell--macro { width: 36px; padding-left: 10px; }
    .status__fill {
        width: 324px;
        border-right: 2px solid #88a8d7;
        flex: none;
    }
    .status__right {
        flex: 1;
        display: flex;
        padding-left: 5px;
        background: linear-gradient(#bbd3f3, #91b5e5);
    }
    .status__right svg:first-child {
        margin-top: 2px;
    }
    .status__zoom {
        padding-left: 8px;
        width: 26px;
        flex: none;
    }

    .orb {
        position: absolute;
        left: 6px;
        top: 6px;
    }
    .controls {
        position: absolute;
        right: 0;
        top: 0;
        background: #000;
    }
    .watermark {
        position: absolute;
        left: 352px;
        top: 0;
        font-family: "DejaVu Sans", sans-serif;
        letter-spacing: 0;
    }
    .highlight {
        position: absolute;
        left: 320px;
        top: 28px;
        width: 199px;
        height: 126px;
        box-sizing: border-box;
        border: 5px solid #ed1385;
    }

    .tools {
        position: absolute;
        left: 18px;
        top: 212px;
        width: 33px;
        height: 353px;
        background: #232a34;
        display: flex;
        flex-direction: column;
        align-items: center;
    }
    .tools__close {
        margin: 6px 0 6px 12px;
    }
    .tools__btn {
        width: 25px;
        height: 24px;
        box-sizing: border-box;
        border: 1px solid #3d444e;
        background: #11151a;
        display: flex;
        align-items: center;
        justify-content: center;
        margin-bottom: 2.1px;
        flex: none;
    }
    .tools__btn.selected {
        background: #3796f3;
        border-color: #3796f3;
        height: 25px;
        margin-bottom: 6px;
    }
    .tools__sep {
        width: 33px;
        height: 1px;
        background: #4a515b;
        margin: 3px 0 5px;
        flex: none;
    }
    .tools__foot {
        flex: 1;
        align-self: stretch;
        background: #000;
        display: flex;
        justify-content: center;
        align-items: center;
        border-top: 1px solid #3d444e;
    }
    .tools__resize {
        width: 25px;
        height: 14px;
        box-sizing: border-box;
        border: 1px solid #3d444e;
        display: flex;
        align-items: center;
        justify-content: center;
    }

    .dialog {
        position: absolute;
        left: 176px;
        top: 223px;
        width: 607px;
        height: 249px;
        box-sizing: border-box;
        border: 1px solid #64403a;
        background: #f0f0f0;
        color: #1c1c1c;
        font-family: "DejaVu Sans Condensed", "DejaVu Sans", sans-serif;
        font-stretch: condensed;
        font-size: 10.5px;
        letter-spacing: -0.22px;
        box-shadow: 0 2px 6px rgba(30, 50, 80, .6);
    }
    .dialog__title {
        height: 23px;
        background: #5c2d1e;
        color: #f6efec;
        display: flex;
        justify-content: space-between;
        align-items: center;
        padding: 0 9px 0 3px;
        font-family: "Open Sans", sans-serif;
        font-stretch: normal;
        font-size: 12px;
        letter-spacing: -0.1px;
    }
    .dialog__top {
        display: flex;
        align-items: center;
        height: 20px;
        padding-top: 7px;
    }
    .label {
        width: 155px;
        text-align: right;
        margin-right: 9px;
        flex: none;
    }
    .label--lang {
        width: 158px;
    }
    .select {
        position: relative;
        box-sizing: border-box;
        height: 20px;
        border: 1px solid #9b9b9b;
        background: #fff;
        line-height: 18px;
        padding-left: 2px;
        display: flex;
        justify-content: space-between;
    }
    .select--type { width: 139px; margin-right: 1px; }
    .select--lang { width: 128px; }
    .select__btn {
        width: 16px;
        box-sizing: border-box;
        border: 1px solid #aaa;
        background: #e3e3e3;
        display: flex;
        align-items: center;
        justify-content: center;
    }
    .select__btn--hot {
        background: #c9e4f7;
        border-color: #1d4c74;
    }
    .menu {
        position: absolute;
        z-index: 2;
        left: -1px;
        top: 19px;
        width: 140px;
        height: 75px;
        box-sizing: border-box;
        border: 1px solid #555;
        background: #fff;
        display: flex;
    }
    .menu__list {
        width: 122px;
    }
    .menu__item {
        height: 12.2px;
        line-height: 12px;
        padding-left: 1px;
    }
    .menu__item.picked {
        background: #0a78d6;
        color: #fff;
    }
    .menu__bar {
        flex: 1;
        background: #f0f0f0;
        display: flex;
        flex-direction: column;
        align-items: center;
        padding: 5px 0 4px;
    }
    .menu__thumb {
        width: 14px;
        height: 16px;
        margin: 4px 0 auto;
        background: #cdcdcd;
    }

    .fields {
        margin: 9px 6px 0;
        height: 123px;
        box-sizing: border-box;
        border: 1px solid #dcdcdc;
    }
    .fields__legend {
        height: 11px;
        line-height: 1px;
    }
    .fields__legend span {
        background: #f0f0f0;
        margin-left: 2px;
        padding: 0 2px;
        line-height: 1px;
    }
    .fields__row {
        height: 21.6px;
        display: flex;
        align-items: center;
        padding-right: 7px;
    }
    .fields__row .label {
        width: 147px;
    }
    .input {
        flex: 1;
        height: 19px;
        box-sizing: border-box;
        border: 1px solid #a9a9a9;
        background: #fff;
    }
    .input--corp {
        height: 18px;
        border: 2px solid #adc9e1;
        background: #eff1f3;
    }
    .button {
        width: 69px;
        height: 20px;
        box-sizing: border-box;
        border: 1px solid #adadad;
        background: #e1e1e1;
        text-align: center;
        line-height: 18px;
    }
    .button--edit {
        width: 70px;
        height: 19px;
        line-height: 17px;
        margin-left: 8px;
    }
    .button--ok {
        border: 2px solid #1a78bd;
        line-height: 16px;
        margin-right: 10px;
    }
    .check {
        width: 12px;
        height: 12px;
        box-sizing: border-box;
        border: 1px solid #333;
        background: #fff;
        flex: none;
    }
    .dialog__bottom {
        display: flex;
        padding: 5px 7px 0 5px;
    }
    .dialog__bottom .button {
        margin-top: 25px;
    }
    .dialog__bottom .button--ok {
        margin-left: auto;
    }
    .dialog__show {
        display: flex;
        gap: 3px;
        align-items: center;
        height: 14px;
        padding-left: 1px;
    }
    .dialog__tagname {
        height: 18px;
        line-height: 20px;
    }
    .input--tag {
        width: 87px;
        height: 19px;
        line-height: 18px;
        padding-left: 2px;
    }

    .cursor {
        position: absolute;
        z-index: 3;
        left: 472px;
        top: 265px;
    }
</style>
